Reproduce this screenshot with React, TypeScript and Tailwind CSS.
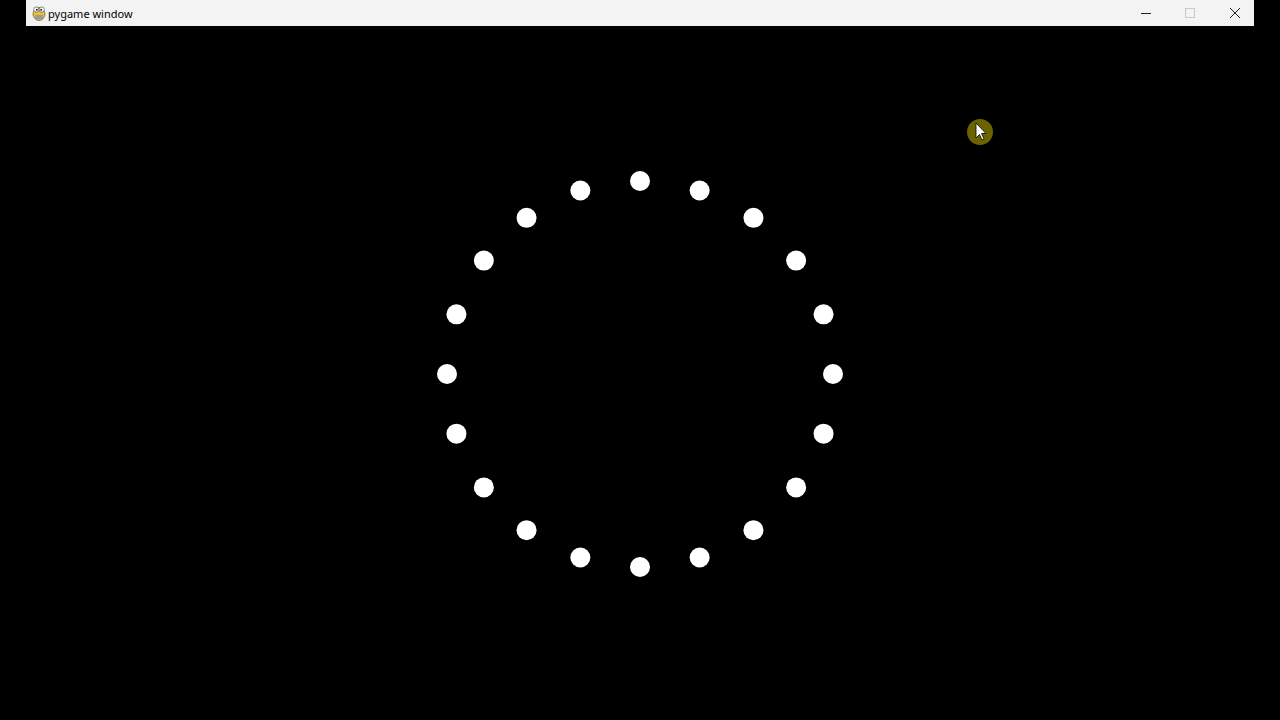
import React from "react";

export default function App() {
  const dots = Array.from({ length: 20 }, (_, i) => {
    const a = (i * 18 * Math.PI) / 180;
    return { x: 640 + 193 * Math.sin(a), y: 374 - 193 * Math.cos(a) };
  });
  return (
    <div className="w-[1280px] h-[720px] bg-black relative overflow-hidden" style={{ fontFamily: '"Noto Sans", "Open Sans", sans-serif' }}>
      <div className="ml-[26px] w-[1228px] h-[26px] bg-[#f3f3f3] flex items-center">
        <div className="ml-[5px] w-[16px] h-[18px] flex items-center justify-center">
          <svg width="16" height="18" viewBox="0 0 16 18">
            <ellipse cx="8" cy="10" rx="6" ry="6.5" fill="#e8c23a" stroke="#8a6a10" strokeWidth="0.8" />
            <circle cx="5.3" cy="5.5" r="2.6" fill="#fff" stroke="#555" strokeWidth="0.7" />
            <circle cx="10.7" cy="5.5" r="2.6" fill="#fff" stroke="#555" strokeWidth="0.7" />
            <circle cx="5.8" cy="5.7" r="1" fill="#222" />
            <circle cx="10.2" cy="5.7" r="1" fill="#222" />
            <rect x="4" y="11" width="8" height="4.5" rx="1" fill="#9a9a9a" />
          </svg>
        </div>
        <span className="ml-[1px] text-[11px] text-black leading-none">pygame window</span>
        <div className="ml-auto flex h-full">
          <div className="w-[44px] h-full flex items-center justify-center">
            <div className="w-[10px] h-px bg-[#222]" />
          </div>
          <div className="w-[44px] h-full flex items-center justify-center">
            <div className="w-[10px] h-[10px] border border-[#c8c8c8]" />
          </div>
          <div className="w-[42px] h-full flex items-center justify-center pl-[4px]">
            <svg width="12" height="12" viewBox="0 0 12 12">
              <path d="M1 1 L11 11 M11 1 L1 11" stroke="#222" strokeWidth="1" />
            </svg>
          </div>
        </div>
      </div>
      <svg className="absolute left-0 top-0" width="1280" height="720">
        {dots.map((d, i) => (
          <circle key={i} cx={d.x} cy={d.y} r="10" fill="#fff" />
        ))}
        <circle cx="980" cy="132" r="13" fill="#6b6200" />
        <path d="M976 123 L976 138 L979.5 134.5 L982 140 L984 139 L981.5 133.5 L986 133.5 Z" fill="#fff" stroke="#000" strokeWidth="0.8" strokeLinejoin="round" />
      </svg>
    </div>
  );
}
